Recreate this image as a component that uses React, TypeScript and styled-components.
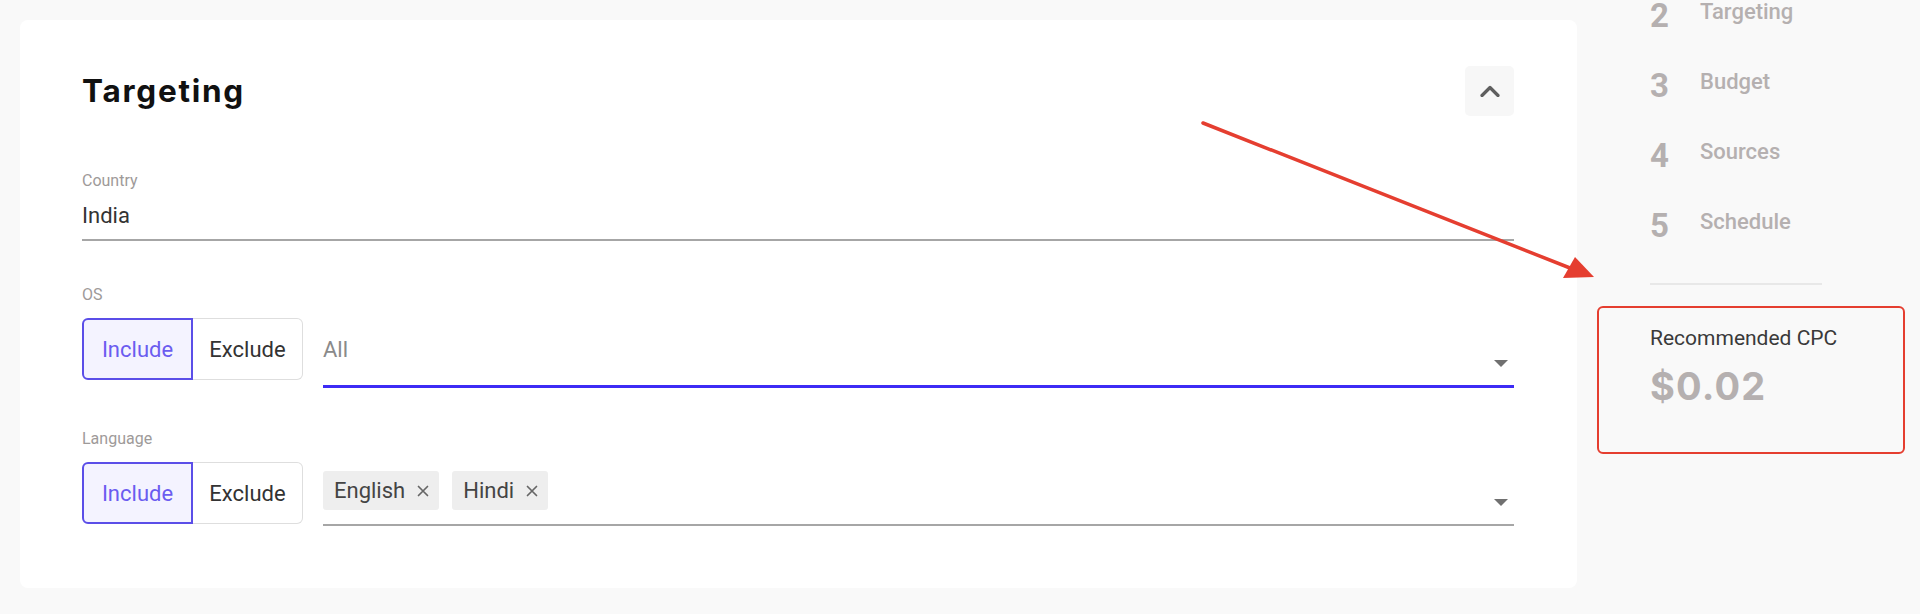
import styled, { createGlobalStyle } from "styled-components"

const GlobalStyle = createGlobalStyle`
    html, body {
        margin: 0;
        padding: 0;
        background: #f9f9f9;
        font-family: Roboto, "Liberation Sans", sans-serif;
    }
    * {
        box-sizing: border-box;
    }
`

const colors = {
    page: "#f9f9f9",
    text: "#333333",
    label: "#9e9a99",
    muted: "#b5b0b0",
    purple: "#5b4ee8",
    purpleText: "#6b5cf0",
    purpleBg: "#f4f3ff",
    blue: "#3d2bf5",
    line: "#a6a6a6",
    red: "#e53e30",
}

const Page = styled.div`
    position: relative;
    display: flex;
    height: 614px;
    overflow: hidden;
    background: ${colors.page};
`

const Main = styled.main`
    padding: 20px 0 0 20px;
`

const Card = styled.section`
    width: 1557px;
    height: 568px;
    background: #ffffff;
    border-radius: 8px;
    padding: 46px 63px 0 62px;
`

const Header = styled.header`
    display: flex;
    align-items: center;
    justify-content: space-between;
    height: 50px;
`

const Title = styled.h2`
    margin: 0;
    font-family: Inter, "Liberation Sans", sans-serif;
    font-size: 31.5px;
    font-weight: 700;
    letter-spacing: 0.055em;
    line-height: 1.2;
    color: #111111;
`

const CollapseButton = styled.button`
    width: 49px;
    height: 50px;
    border: none;
    border-radius: 5px;
    background: #f7f7f7;
    display: flex;
    align-items: center;
    justify-content: center;
    padding: 0;
    cursor: pointer;
`

const Field = styled.div<{ $top: number }>`
    margin-top: ${(p) => p.$top}px;
`

const Label = styled.div`
    font-size: 16px;
    line-height: 19px;
    color: ${colors.label};
`

const TextValue = styled.div`
    margin-top: 13px;
    font-size: 22px;
    line-height: 26px;
    color: ${colors.text};
    padding-bottom: 10px;
    border-bottom: 2px solid ${colors.line};
`

const Row = styled.div`
    display: flex;
    align-items: flex-start;
    gap: 20px;
    margin-top: 14px;
`

const Toggle = styled.div`
    display: flex;
    flex-shrink: 0;
`

const ToggleButton = styled.button<{ $active?: boolean }>`
    height: 62px;
    font-family: Roboto, "Liberation Sans", sans-serif;
    font-size: 22px;
    cursor: pointer;
    ${(p) =>
        p.$active
            ? `
        width: 111px;
        color: ${colors.purpleText};
        background: ${colors.purpleBg};
        border: 2px solid ${colors.purple};
        border-radius: 6px 0 0 6px;
    `
            : `
        width: 110px;
        color: ${colors.text};
        background: #ffffff;
        border: 1px solid #dedede;
        border-left: none;
        border-radius: 0 6px 6px 0;
    `}
`

const Select = styled.div<{ $focused?: boolean }>`
    position: relative;
    flex: 1;
    display: flex;
    align-items: center;
    gap: 13px;
    ${(p) =>
        p.$focused
            ? `
        padding: 19px 40px 22px 0;
        border-bottom: 3px solid ${colors.blue};
    `
            : `
        padding: 9px 40px 14px 0;
        border-bottom: 2px solid ${colors.line};
    `}
`

const Placeholder = styled.span`
    font-size: 22px;
    line-height: 26px;
    color: #8a8a8a;
`

const Chip = styled.span`
    display: inline-flex;
    align-items: center;
    gap: 12px;
    height: 39px;
    padding: 0 10px 0 11px;
    background: #eeeeee;
    border-radius: 3px;
    font-size: 22px;
    color: #444444;
`

const DropArrow = styled.svg<{ $bottom: number }>`
    position: absolute;
    right: 6px;
    bottom: ${(p) => p.$bottom}px;
`

const Sidebar = styled.aside`
    width: 343px;
    padding: 0 15px 0 20px;
`

const Steps = styled.ol`
    list-style: none;
    margin: -1px 0 0 0;
    padding: 0 0 0 53px;
`

const Step = styled.li`
    display: flex;
    align-items: flex-start;
    height: 70px;
    color: ${colors.muted};
`

const StepNumber = styled.span`
    width: 50px;
    font-size: 33px;
    font-weight: 700;
    line-height: 33px;
`

const StepLabel = styled.span`
    padding-top: 2px;
    font-size: 22px;
    font-weight: 500;
    line-height: 22px;
`

const Divider = styled.hr`
    margin: 4px 0 0 53px;
    width: 172px;
    border: none;
    border-top: 2px solid #e8e8e8;
`

const CpcBox = styled.div`
    margin-top: 21px;
    height: 148px;
    border: 2px solid ${colors.red};
    border-radius: 6px;
    padding: 18px 0 0 51px;
`

const CpcTitle = styled.div`
    font-size: 21px;
    line-height: 25px;
    color: #3a3a3a;
`

const CpcValue = styled.div`
    margin-top: 13px;
    font-family: Inter, "Liberation Sans", sans-serif;
    font-size: 38px;
    font-weight: 700;
    line-height: 44px;
    letter-spacing: 0.03em;
    color: ${colors.muted};
`

const Annotation = styled.svg`
    position: absolute;
    left: 0;
    top: 0;
    pointer-events: none;
`

const ChevronUp = () => (
    <svg width="20" height="12" viewBox="0 0 20 12">
        <polyline points="2,10.5 10,2.5 18,10.5" fill="none" stroke="#5f5f5f" strokeWidth="3.2" strokeLinecap="round" strokeLinejoin="round" />
    </svg>
)

const CloseIcon = () => (
    <svg width="12" height="12" viewBox="0 0 12 12">
        <path d="M1.5 1.5 L10.5 10.5 M10.5 1.5 L1.5 10.5" stroke="#666" strokeWidth="1.7" strokeLinecap="round" />
    </svg>
)

const Arrow = ({ bottom }: { bottom: number }) => (
    <DropArrow $bottom={bottom} width="14" height="7" viewBox="0 0 14 7">
        <polygon points="0,0 14,0 7,7" fill="#707070" />
    </DropArrow>
)

const steps = [
    { n: 2, label: "Targeting" },
    { n: 3, label: "Budget" },
    { n: 4, label: "Sources" },
    { n: 5, label: "Schedule" },
]

const languages = ["English", "Hindi"]

const App = () => {
    return (
        <Page>
            <GlobalStyle />
            <Main>
                <Card>
                    <Header>
                        <Title>Targeting</Title>
                        <CollapseButton aria-label="Collapse">
                            <ChevronUp />
                        </CollapseButton>
                    </Header>

                    <Field $top={55}>
                        <Label>Country</Label>
                        <TextValue>India</TextValue>
                    </Field>

                    <Field $top={44}>
                        <Label>OS</Label>
                        <Row>
                            <Toggle>
                                <ToggleButton $active>Include</ToggleButton>
                                <ToggleButton>Exclude</ToggleButton>
                            </Toggle>
                            <Select $focused>
                                <Placeholder>All</Placeholder>
                                <Arrow bottom={18} />
                            </Select>
                        </Row>
                    </Field>

                    <Field $top={41}>
                        <Label>Language</Label>
                        <Row>
                            <Toggle>
                                <ToggleButton $active>Include</ToggleButton>
                                <ToggleButton>Exclude</ToggleButton>
                            </Toggle>
                            <Select>
                                {languages.map((lang) => (
                                    <Chip key={lang}>
                                        {lang}
                                        <CloseIcon />
                                    </Chip>
                                ))}
                                <Arrow bottom={18} />
                            </Select>
                        </Row>
                    </Field>
                </Card>
            </Main>

            <Sidebar>
                <Steps>
                    {steps.map((s) => (
                        <Step key={s.n}>
                            <StepNumber>{s.n}</StepNumber>
                            <StepLabel>{s.label}</StepLabel>
                        </Step>
                    ))}
                </Steps>
                <Divider />
                <CpcBox>
                    <CpcTitle>Recommended CPC</CpcTitle>
                    <CpcValue>$0.02</CpcValue>
                </CpcBox>
            </Sidebar>

            {/* red annotation arrow drawn over the page */}
            <Annotation width="1920" height="614" viewBox="0 0 1920 614">
                <line x1="1203" y1="123" x2="1570" y2="268" stroke={colors.red} strokeWidth="3.5" strokeLinecap="round" />
                <polygon points="1594,277 1563,278 1575,257" fill={colors.red} />
            </Annotation>
        </Page>
    )
}

export default App
